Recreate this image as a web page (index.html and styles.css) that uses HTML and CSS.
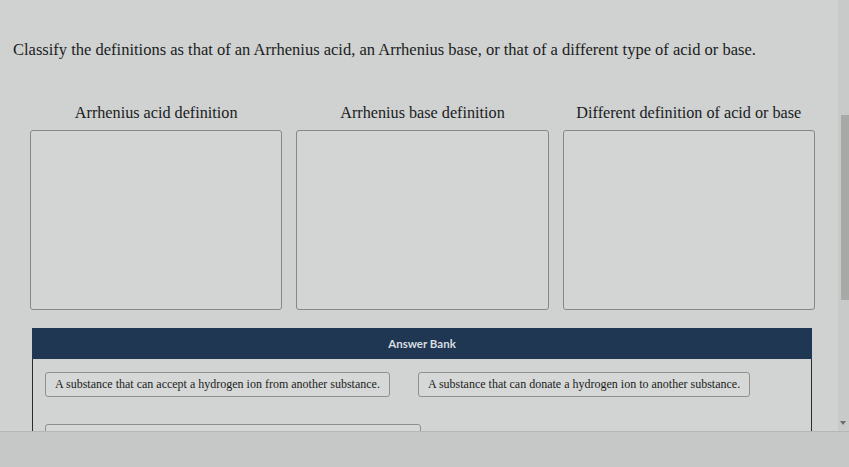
FILE: index.html
```html
<!DOCTYPE html>
<html lang="en">
<head>
  <meta charset="UTF-8">
  <title>Classify the definitions</title>
  <link rel="stylesheet" href="styles.css">
</head>
<body>
  <div class="window">
    <main class="content">
      <p class="prompt">Classify the definitions as that of an Arrhenius acid, an Arrhenius base, or that of a different type of acid or base.</p>

      <section class="bins">
        <div class="bin">
          <h3 class="bin-label">Arrhenius acid definition</h3>
          <div class="drop"></div>
        </div>
        <div class="bin">
          <h3 class="bin-label">Arrhenius base definition</h3>
          <div class="drop"></div>
        </div>
        <div class="bin">
          <h3 class="bin-label">Different definition of acid or base</h3>
          <div class="drop"></div>
        </div>
      </section>

      <section class="bank">
        <div class="bank-head">Answer Bank</div>
        <div class="bank-body">
          <div class="chip">A substance that can accept a hydrogen ion from another substance.</div>
          <div class="chip">A substance that can donate a hydrogen ion to another substance.</div>
          <div class="chip">A substance that increases the concentration of hydroxide ions in solution.</div>
        </div>
      </section>
    </main>
    <div class="scrollbar">
      <div class="thumb"></div>
      <span class="arrow"></span>
    </div>
  </div>
  <div class="below"></div>
</body>
</html>
```

FILE: styles.css
```css
body {
  margin: 0;
  background: #c5c8c6;
  font-family: "Liberation Serif", "Times New Roman", serif;
  color: #1b1c1d;
}
.window {
  height: 431px;
  display: flex;
  background: #cfd2d1;
  overflow: hidden;
  box-shadow: 0 1px 0 #b4b7b5;
}
.content {
  flex: 1;
  padding: 0 23px 0 30px;
  overflow: hidden;
}
.prompt {
  margin: 41px 0 0 -17px;
  font-size: 16.5px;
  line-height: 18px;
  white-space: nowrap;
}
.bins {
  margin-top: 45px;
  display: grid;
  grid-template-columns: repeat(3, 1fr);
  gap: 14px;
}
.bin-label {
  margin: 0 0 8px;
  font-weight: normal;
  font-size: 16.2px;
  line-height: 18px;
  text-align: center;
}
.drop {
  height: 178px;
  border: 1px solid #858887;
  border-radius: 3px;
  background: #d2d5d4;
}
.bank {
  margin: 18px 3px 0 2px;
}
.bank-head {
  height: 31px;
  background: #1f3752;
  color: #d9dde0;
  font-family: Lato, "Open Sans", sans-serif;
  font-weight: bold;
  font-size: 11.5px;
  line-height: 31px;
  text-align: center;
}
.bank-body {
  border-left: 1px solid #2a2c2d;
  border-right: 1px solid #2a2c2d;
  background: #d1d4d2;
  padding: 13px 12px 0;
  display: flex;
  flex-wrap: wrap;
  column-gap: 28px;
  row-gap: 27px;
}
.chip {
  padding: 0 9px;
  height: 23px;
  line-height: 23px;
  border: 1px solid #8d908f;
  border-radius: 3px;
  background: #d5d8d6;
  font-size: 12px;
  white-space: nowrap;
}
.scrollbar {
  width: 11px;
  background: #c8cac9;
  display: flex;
  flex-direction: column;
  align-items: flex-end;
}
.thumb {
  margin-top: 115px;
  width: 8px;
  height: 185px;
  background: #a6a9a6;
}
.arrow {
  margin: auto 3px 6px 0;
  width: 0;
  height: 0;
  border-left: 3px solid transparent;
  border-right: 3px solid transparent;
  border-top: 4px solid #6b6e6d;
}
.below {
  height: 36px;
}
```
